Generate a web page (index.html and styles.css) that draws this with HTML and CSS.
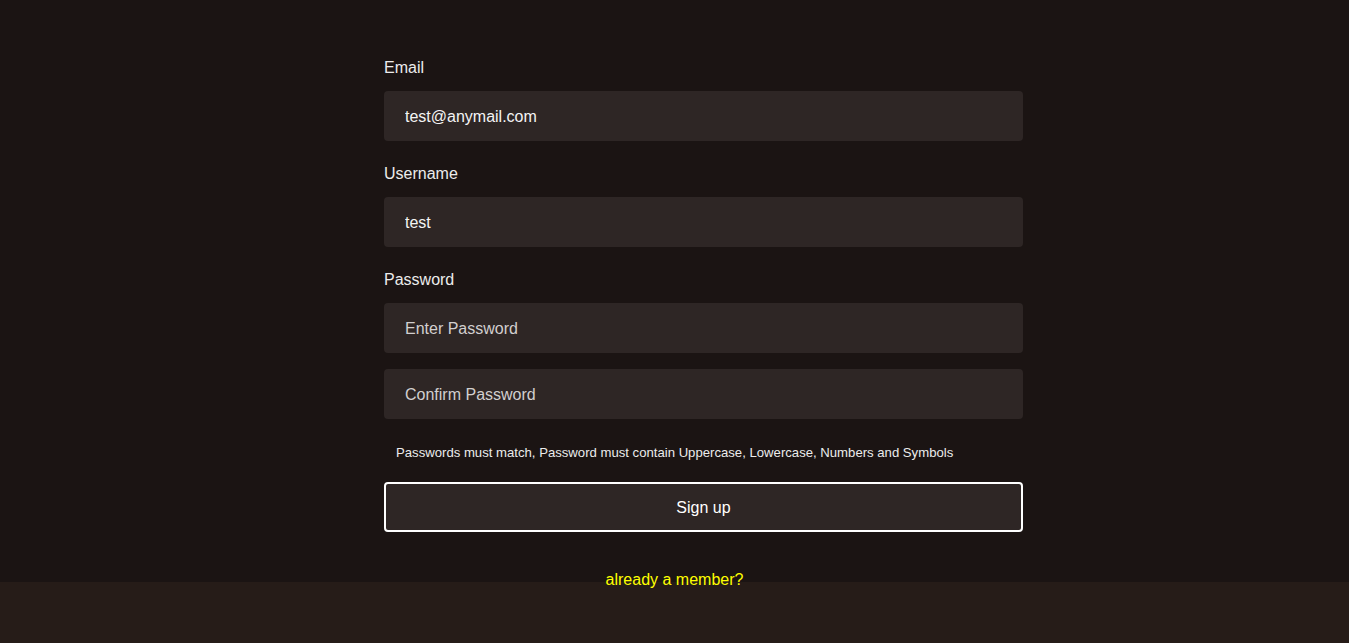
FILE: index.html
```html
<!DOCTYPE html>
<html lang="en">
<head>
<meta charset="utf-8">
<title>Sign up</title>
<link rel="stylesheet" href="styles.css">
</head>
<body>
<main class="main">
  <form class="form">
    <div class="field">
      <label class="label" for="email">Email</label>
      <input class="input" id="email" type="text" value="test@anymail.com">
    </div>
    <div class="field">
      <label class="label" for="username">Username</label>
      <input class="input" id="username" type="text" value="test">
    </div>
    <div class="field">
      <label class="label" for="password">Password</label>
      <input class="input" id="password" type="password" placeholder="Enter Password">
      <input class="input input-confirm" type="password" placeholder="Confirm Password">
    </div>
    <p class="hint">Passwords must match, Password must contain Uppercase, Lowercase, Numbers and Symbols</p>
    <button class="btn" type="button">Sign up</button>
  </form>
  <div class="member"><a class="member-link" href="#">already a member?</a></div>
</main>
<footer class="footer"></footer>
</body>
</html>
```

FILE: styles.css
```css
html, body {
  margin: 0;
  padding: 0;
}
body {
  background: #1b1413;
  font-family: "Liberation Sans", Arial, sans-serif;
  color: #ececec;
  height: 643px;
  overflow: hidden;
}
.main {
  height: 582px;
  padding-top: 58px;
  box-sizing: border-box;
}
.form {
  width: 639px;
  margin-left: 384px;
  display: flex;
  flex-direction: column;
}
.field {
  display: flex;
  flex-direction: column;
  margin-bottom: 23px;
}
.label {
  font-size: 16px;
  line-height: 20px;
  color: #ececec;
  margin-bottom: 13px;
}
.input {
  height: 50px;
  box-sizing: border-box;
  border: none;
  border-radius: 4px;
  background: #2e2625;
  color: #f4f4f4;
  font-family: "Liberation Sans", Arial, sans-serif;
  font-size: 16px;
  padding: 2px 20px 0 21px;
  outline: none;
}
.input::placeholder {
  color: #d2cfcf;
  opacity: 1;
}
.input-confirm {
  margin-top: 16px;
}
.hint {
  margin: 3px 0 0;
  padding-left: 12px;
  font-size: 13.15px;
  line-height: 15px;
  color: #ececec;
}
.btn {
  margin-top: 22px;
  height: 50px;
  box-sizing: border-box;
  border: 2px solid #ffffff;
  border-radius: 4px;
  background: #2e2625;
  color: #ffffff;
  font-family: "Liberation Sans", Arial, sans-serif;
  font-size: 16px;
  padding: 2px 0 0;
  cursor: pointer;
}
.member {
  margin-top: 39px;
  text-align: center;
  font-size: 16px;
  line-height: 18px;
}
.member-link {
  color: #ffff00;
  text-decoration: none;
}
.footer {
  height: 61px;
  background: #261c18;
}
```
